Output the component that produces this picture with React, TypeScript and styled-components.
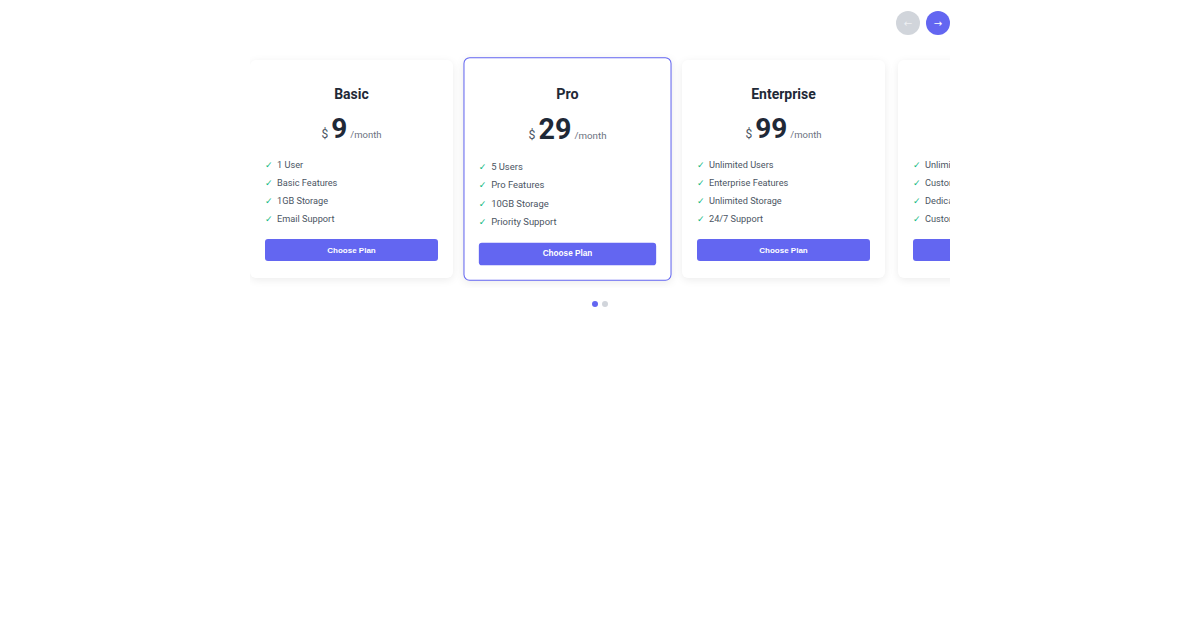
import { FC } from 'react'
import styled, { createGlobalStyle } from 'styled-components'

const GlobalStyle = createGlobalStyle`
    body {
        margin: 0;
        background: #ffffff;
        font-family: Roboto, 'Liberation Sans', sans-serif;
    }
`
const Page = styled.div`
    width: 700px;
    margin: 0 auto;
    padding-top: 11px;
`
const Controls = styled.div`
    display: flex;
    justify-content: flex-end;
    gap: 6px;
    margin-bottom: 15px;
`
const ArrowButton = styled.button<{ $active?: boolean }>`
    width: 24px;
    height: 24px;
    border-radius: 50%;
    border: none;
    padding: 0;
    display: flex;
    align-items: center;
    justify-content: center;
    background: ${p => (p.$active ? '#6366f1' : '#d1d5db')};
    color: ${p => (p.$active ? '#ffffff' : '#eef0f3')};
    font-family: 'DejaVu Sans', sans-serif;
    font-size: 10px;
`
const Viewport = styled.div`
    overflow: hidden;
    padding: 10px 0;
`
const Track = styled.div`
    display: flex;
    gap: 13px;
`
const Card = styled.div<{ $featured?: boolean }>`
    flex: 0 0 203px;
    box-sizing: border-box;
    padding: ${p => (p.$featured ? '26.5px 14px 14.5px' : '25px 14px 16px')};
    background: #ffffff;
    border-radius: 6px;
    border: 1px solid ${p => (p.$featured ? '#6366f1' : 'transparent')};
    box-shadow: 0px 2px 8px rgba(0, 0, 0, 0.08);
    transform: ${p => (p.$featured ? 'scale(1.025)' : 'none')};
    display: flex;
    flex-direction: column;
`
const Title = styled.h3<{ $hidden?: boolean }>`
    margin: 0;
    text-align: center;
    font-size: 14px;
    line-height: 17px;
    font-weight: 700;
    color: #1f2937;
    visibility: ${p => (p.$hidden ? 'hidden' : 'visible')};
`
const PriceRow = styled.div<{ $hidden?: boolean }>`
    display: flex;
    justify-content: center;
    align-items: baseline;
    gap: 3px;
    margin-top: 12px;
    height: 28px;
    visibility: ${p => (p.$hidden ? 'hidden' : 'visible')};
`
const Currency = styled.span`
    font-size: 12px;
    color: #4b5563;
`
const Amount = styled.span`
    font-size: 28px;
    line-height: 28px;
    font-weight: 700;
    color: #1f2937;
`
const Period = styled.span`
    font-size: 9.5px;
    color: #6b7280;
`
const Features = styled.ul`
    list-style: none;
    margin: 13px 0 0;
    padding: 0;
`
const Feature = styled.li`
    display: flex;
    align-items: center;
    gap: 5px;
    font-size: 9.2px;
    line-height: 18px;
    color: #4b5563;
    white-space: nowrap;
`
const Check = styled.span`
    color: #10b981;
    font-size: 9px;
    font-weight: 700;
    font-family: 'DejaVu Sans', sans-serif;
    width: 7px;
`
const ChooseButton = styled.button`
    margin-top: 11px;
    height: 22px;
    width: 100%;
    border: none;
    border-radius: 3px;
    background: #6366f1;
    color: #ffffff;
    font-family: 'Liberation Sans', Arial, sans-serif;
    font-size: 8px;
    font-weight: 700;
`
const Dots = styled.div`
    display: flex;
    justify-content: center;
    gap: 4px;
    margin-top: 13px;
`
const Dot = styled.span<{ $active?: boolean }>`
    width: 6px;
    height: 6px;
    border-radius: 50%;
    background: ${p => (p.$active ? '#6366f1' : '#d1d5db')};
`

type Plan = {
    name: string
    price: string
    features: string[]
    featured?: boolean
    hideHeader?: boolean
}

const plans: Plan[] = [
    { name: 'Basic', price: '9', features: ['1 User', 'Basic Features', '1GB Storage', 'Email Support'] },
    { name: 'Pro', price: '29', features: ['5 Users', 'Pro Features', '10GB Storage', 'Priority Support'], featured: true },
    { name: 'Enterprise', price: '99', features: ['Unlimited Users', 'Enterprise Features', 'Unlimited Storage', '24/7 Support'] },
    { name: 'Custom', price: '199', features: ['Unlimited', 'Custom', 'Dedicated', 'Custom'], hideHeader: true },
]

const PlanCard: FC<{ plan: Plan }> = ({ plan }) => (
    <Card $featured={plan.featured}>
        <Title $hidden={plan.hideHeader}>{plan.name}</Title>
        <PriceRow $hidden={plan.hideHeader}>
            <Currency>$</Currency>
            <Amount>{plan.price}</Amount>
            <Period>/month</Period>
        </PriceRow>
        <Features>
            {plan.features.map((f, i) => (
                <Feature key={i}>
                    <Check>✓</Check>
                    {f}
                </Feature>
            ))}
        </Features>
        <ChooseButton>Choose Plan</ChooseButton>
    </Card>
)

const App: FC = () => (
    <>
        <GlobalStyle />
        <Page>
            <Controls>
                <ArrowButton>←</ArrowButton>
                <ArrowButton $active>→</ArrowButton>
            </Controls>
            <Viewport>
                <Track>
                    {plans.map(p => <PlanCard key={p.name} plan={p} />)}
                </Track>
            </Viewport>
            <Dots>
                <Dot $active />
                <Dot />
            </Dots>
        </Page>
    </>
)

export default App
